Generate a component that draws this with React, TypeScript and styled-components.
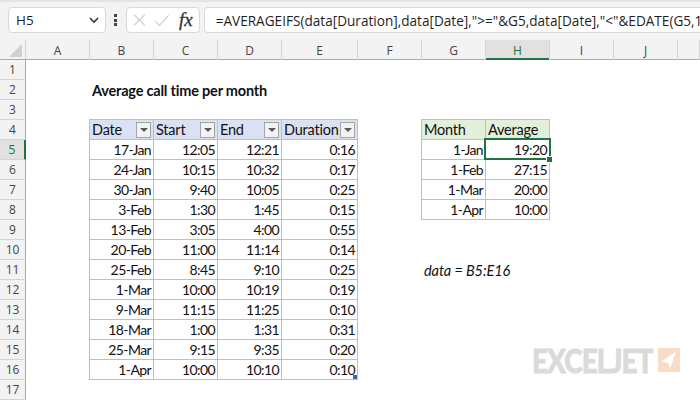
import React from 'react';
import styled, { createGlobalStyle } from 'styled-components';

const theme = {
  chrome: '#f3f3f3',
  line: '#bfbfbf',
  headerLine: '#ababab',
  green: '#217346',
  text: '#1f1f1f',
  tableBlue: '#d9e1f2',
  tableGreen: '#e2efda',
};

const sheetColumns = '26px 64px 64px 64px 64px 76px 64px 64px 64px 64px 64px 22px';

const GlobalStyle = createGlobalStyle`
  html, body {
    margin: 0;
    padding: 0;
    width: 700px;
    height: 400px;
    overflow: hidden;
    background: #fff;
  }
`;

const Window = styled.div`
  position: relative;
  width: 700px;
  height: 400px;
  overflow: hidden;
  font-family: 'Open Sans', sans-serif;
  color: ${theme.text};
`;

const FormulaBar = styled.div`
  display: flex;
  align-items: flex-start;
  height: 40px;
  box-sizing: border-box;
  padding: 5px 0 0 8px;
  background: ${theme.chrome};
  border-top: 2px solid #e4e4e4;
`;

const Box = styled.div`
  display: flex;
  align-items: center;
  box-sizing: border-box;
  height: 26px;
  background: #fff;
  border: 1px solid #d9d9d9;
  border-radius: 4px;
`;

const NameBox = styled(Box)`
  width: 102px;
  justify-content: space-between;
  padding: 0 5px 0 7px;
  font-size: 13.5px;
`;

const Dots = styled.div`
  display: flex;
  flex-direction: column;
  gap: 1.5px;
  width: 4px;
  margin: 7px 8px 0 8px;

  span {
    width: 3px;
    height: 3px;
    background: #444;
  }
`;

const ButtonsBox = styled(Box)`
  width: 74px;
  gap: 9px;
  padding: 0 4px 0 6px;
`;

const FxLabel = styled.span`
  font-family: 'Liberation Serif', serif;
  font-style: italic;
  font-size: 19px;
  color: #333;
  margin-left: auto;
  padding-right: 2px;
  -webkit-text-stroke: 0.3px #333;
`;

const FormulaBox = styled(Box)`
  width: 520px;
  margin-left: 4px;
  padding-left: 11px;
  font-size: 13.6px;
  white-space: nowrap;
  border-right: none;
  border-radius: 4px 0 0 4px;
  overflow: hidden;
`;

const ColumnRow = styled.div`
  display: grid;
  grid-template-columns: ${sheetColumns};
  height: 20px;
  box-sizing: border-box;
  background: ${theme.chrome};
  border-bottom: 1px solid ${theme.headerLine};
`;

const Corner = styled.div`
  display: flex;
  align-items: flex-end;
  justify-content: flex-end;
  padding: 0 3px 2px 0;
  border-right: 1px solid #d4d4d4;
`;

const ColumnHead = styled.div<{ $active?: boolean }>`
  display: flex;
  align-items: center;
  justify-content: center;
  font-family: 'Open Sans', sans-serif;
  font-size: 12px;
  color: ${(p) => (p.$active ? theme.green : '#444')};
  background: ${(p) => (p.$active ? '#e1e1e1' : 'transparent')};
  border-right: 1px solid #d4d4d4;
  box-shadow: ${(p) => (p.$active ? `inset 0 -2px 0 ${theme.green}` : 'none')};
  margin-bottom: -1px;
`;

const Sheet = styled.div`
  display: grid;
  grid-template-columns: ${sheetColumns};
  grid-auto-rows: 20px;
  font-family: 'Lato', sans-serif;
  font-size: 14px;
  color: #111;
`;

const RowHead = styled.div<{ $row: number; $active?: boolean }>`
  grid-column: 1;
  grid-row: ${(p) => p.$row};
  display: flex;
  align-items: center;
  justify-content: center;
  box-sizing: border-box;
  font-family: 'Open Sans', sans-serif;
  font-size: 12px;
  color: ${(p) => (p.$active ? theme.green : '#444')};
  background: ${(p) => (p.$active ? '#e1e1e1' : theme.chrome)};
  border-bottom: 1px solid #d4d4d4;
  border-right: ${(p) => (p.$active ? `2px solid ${theme.green}` : `1px solid ${theme.headerLine}`)};
`;

const Title = styled.div`
  grid-column: 3 / 7;
  grid-row: 2;
  display: flex;
  align-items: center;
  font-weight: 700;
  font-size: 14.5px;
  letter-spacing: -0.2px;
  padding-left: 2px;
`;

const Note = styled.div`
  grid-column: 8 / 10;
  grid-row: 11;
  display: flex;
  align-items: center;
  font-style: italic;
  font-size: 14.5px;
  letter-spacing: -0.1px;
  padding-left: 2px;
`;

const Cell = styled.div<{ $row: number; $col: number }>`
  grid-column: ${(p) => p.$col};
  grid-row: ${(p) => p.$row};
  position: relative;
  display: flex;
  align-items: center;
  justify-content: flex-end;
  box-sizing: border-box;
  padding-right: 2px;
  margin: -1px 0 0 -1px;
  width: calc(100% + 1px);
  height: 21px;
  border: 1px solid ${theme.line};
  letter-spacing: -0.6px;
`;

const HeadCell = styled(Cell)<{ $fill: string }>`
  justify-content: space-between;
  padding-left: 2px;
  padding-right: 2px;
  background: ${(p) => p.$fill};
  font-size: 14.5px;
  letter-spacing: -0.2px;
`;

const FilterButton = styled.span`
  display: flex;
  align-items: center;
  justify-content: center;
  flex: none;
  box-sizing: border-box;
  width: 15px;
  height: 16px;
  background: #f2f2f2;
  border: 1px solid #a6a6a6;

  &::after {
    content: '';
    border-left: 4px solid transparent;
    border-right: 4px solid transparent;
    border-top: 4px solid #595959;
  }
`;

const SelectedCell = styled(Cell)`
  z-index: 2;
  margin: -2px 0 0 -2px;
  width: calc(100% + 3px);
  height: 22px;
  border: 2px solid ${theme.green};
`;

const FillHandle = styled.span`
  position: absolute;
  right: -4px;
  bottom: -5px;
  width: 5px;
  height: 5px;
  background: ${theme.green};
  border: 1px solid #fff;
`;

const ResizeHandle = styled.span`
  position: absolute;
  right: 0;
  bottom: 0;
  width: 4px;
  height: 4px;
  background: #4a5fb5;
`;

const Watermark = styled.div`
  position: absolute;
  left: 532px;
  top: 348px;
  display: flex;
  align-items: flex-start;
  gap: 3px;
  pointer-events: none;
`;

const WatermarkText = styled.span`
  display: block;
  width: 123px;
  white-space: nowrap;
  font-family: 'Lato', sans-serif;
  font-weight: 900;
  font-size: 33px;
  letter-spacing: -1px;
  color: #dadada;
  -webkit-text-stroke: 0.8px #dadada;
  line-height: 24px;
  transform: scaleX(0.84);
  transform-origin: left center;
`;

const columns = ['A', 'B', 'C', 'D', 'E', 'F', 'G', 'H', 'I', 'J', ''];

const calls = [
  ['17-Jan', '12:05', '12:21', '0:16'],
  ['24-Jan', '10:15', '10:32', '0:17'],
  ['30-Jan', '9:40', '10:05', '0:25'],
  ['3-Feb', '1:30', '1:45', '0:15'],
  ['13-Feb', '3:05', '4:00', '0:55'],
  ['20-Feb', '11:00', '11:14', '0:14'],
  ['25-Feb', '8:45', '9:10', '0:25'],
  ['1-Mar', '10:00', '10:19', '0:19'],
  ['9-Mar', '11:15', '11:25', '0:10'],
  ['18-Mar', '1:00', '1:31', '0:31'],
  ['25-Mar', '9:15', '9:35', '0:20'],
  ['1-Apr', '10:00', '10:10', '0:10'],
];

const averages = [
  ['1-Feb', '27:15'],
  ['1-Mar', '20:00'],
  ['1-Apr', '10:00'],
];

const App = () => {
  const rows = Array.from({ length: 17 }, (_, i) => i + 1);

  return (
    <Window>
      <GlobalStyle />
      <FormulaBar>
        <NameBox>
          H5
          <svg width="12" height="8" viewBox="0 0 12 8">
            <path d="M2 2l4 4 4-4" fill="none" stroke="#333" strokeWidth="1.6" />
          </svg>
        </NameBox>
        <Dots>
          <span />
          <span />
          <span />
        </Dots>
        <ButtonsBox>
          <svg width="14" height="14" viewBox="0 0 14 14">
            <path d="M1 1l12 12M13 1L1 13" stroke="#c8c8c8" strokeWidth="1.2" fill="none" />
          </svg>
          <svg width="17" height="13" viewBox="0 0 17 13">
            <path d="M1 7l5 5L16 1" stroke="#c8c8c8" strokeWidth="1.2" fill="none" />
          </svg>
          <FxLabel>fx</FxLabel>
        </ButtonsBox>
        <FormulaBox>{'=AVERAGEIFS(data[Duration],data[Date],">="&G5,data[Date],"<"&EDATE(G5,1))'}</FormulaBox>
      </FormulaBar>

      <ColumnRow>
        <Corner>
          <svg width="13" height="13" viewBox="0 0 13 13">
            <path d="M13 0v13H0z" fill="#d0d0d0" />
          </svg>
        </Corner>
        {columns.map((c, i) => (
          <ColumnHead key={i} $active={c === 'H'}>
            {c}
          </ColumnHead>
        ))}
      </ColumnRow>

      <Sheet>
        {rows.map((r) => (
          <RowHead key={r} $row={r} $active={r === 5}>
            {r}
          </RowHead>
        ))}

        <Title>Average call time per month</Title>

        {['Date', 'Start', 'End', 'Duration'].map((h, i) => (
          <HeadCell key={h} $row={4} $col={3 + i} $fill={theme.tableBlue}>
            {h}
            <FilterButton />
          </HeadCell>
        ))}
        {calls.map((row, r) =>
          row.map((v, c) => (
            <Cell key={`${r}-${c}`} $row={5 + r} $col={3 + c}>
              {v}
              {r === 11 && c === 3 && <ResizeHandle />}
            </Cell>
          ))
        )}

        <HeadCell $row={4} $col={8} $fill={theme.tableGreen}>
          Month
        </HeadCell>
        <HeadCell $row={4} $col={9} $fill={theme.tableGreen}>
          Average
        </HeadCell>
        <Cell $row={5} $col={8}>
          1-Jan
        </Cell>
        <SelectedCell $row={5} $col={9}>
          19:20
          <FillHandle />
        </SelectedCell>
        {averages.map((row, r) =>
          row.map((v, c) => (
            <Cell key={v} $row={6 + r} $col={8 + c}>
              {v}
            </Cell>
          ))
        )}

        <Note>data = B5:E16</Note>
      </Sheet>

      <Watermark>
        <WatermarkText>EXCELJET</WatermarkText>
        <svg width="22" height="24" viewBox="0 0 22 24">
          <rect width="22" height="24" fill="#f8dcc8" />
          <path d="M18 3.5L3.5 13.5l7 1.5 1.5 6z" fill="#fff" />
        </svg>
      </Watermark>
    </Window>
  );
};

export default App;
